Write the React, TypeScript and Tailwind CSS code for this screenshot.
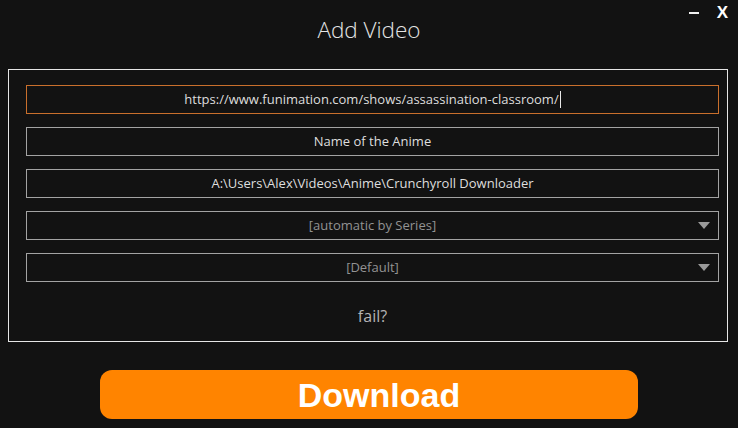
import React from 'react';

// Add Video dialog: URL / name / path inputs, two selects and a download button
const sans = { fontFamily: '"Open Sans", "Noto Sans", sans-serif' };

const Field: React.FC<{ value: string; active?: boolean }> = ({ value, active }) => (
  <div
    className={`h-[29px] flex items-center justify-center border text-[13px] text-[#dedede] ${
      active ? 'border-[#c96f2c]' : 'border-[#a3a3a3]'
    }`}
  >
    <span>{value}</span>
    {active && <span className="inline-block w-px h-[17px] bg-[#e8e8e8] ml-px" />}
  </div>
);

const Select: React.FC<{ value: string }> = ({ value }) => (
  <div className="relative h-[29px] flex items-center justify-center border border-[#a3a3a3] text-[13px] text-[#939393]">
    <span>{value}</span>
    <svg className="absolute right-[8px] top-[10px]" width="12" height="7" viewBox="0 0 12 7">
      <path d="M0 0 H12 L6 7 Z" fill="#9a9a9a" />
    </svg>
  </div>
);

export default function App() {
  return (
    <div className="relative w-[738px] h-[428px] bg-[#121212] flex flex-col" style={sans}>
      {/* window controls */}
      <div className="absolute top-[4px] right-[10px] flex items-center gap-[18px] text-white">
        <span className="block w-[10px] h-[2px] bg-[#f0f0f0] mt-[1px]" />
        <span className="text-[17px] font-bold leading-none" style={{ fontFamily: '"Liberation Sans", Arial, sans-serif' }}>
          X
        </span>
      </div>

      <div className="h-[69px] flex justify-center pt-[14px]">
        <h1 className="text-[22.5px] font-light text-[#e4e4e4] leading-[32px]">Add Video</h1>
      </div>

      <div className="mx-[8px] w-[720px] h-[273px] border border-[#e6e6e6] pt-[15px] pl-[17px] pr-[8px] flex flex-col gap-[13px]">
        <Field value="https://www.funimation.com/shows/assassination-classroom/" active />
        <Field value="Name of the Anime" />
        <Field value="A:\Users\Alex\Videos\Anime\Crunchyroll Downloader" />
        <Select value="[automatic by Series]" />
        <Select value="[Default]" />
        <div className="flex justify-center pt-[9px] text-[16px] text-[#b4b4b4] leading-[24px]">fail?</div>
      </div>

      <button
        className="mx-auto mt-[28px] w-[538px] h-[49px] rounded-[12px] bg-[#ff8400] text-white text-[34px] font-bold leading-none pl-[20px]"
        style={{ fontFamily: '"Liberation Sans", Arial, sans-serif' }}
      >
        Download
      </button>
    </div>
  );
}
